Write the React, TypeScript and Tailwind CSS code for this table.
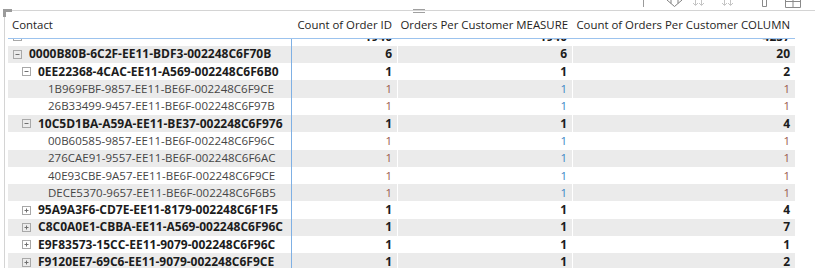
import React from "react"

type Row = {
  level: 0 | 1 | 2
  icon?: "minus" | "plus"
  label: string
  a: string
  b: string
  c: string
}

const rows: Row[] = [
  { level: 0, icon: "minus", label: "", a: "1940", b: "1940", c: "4257" },
  { level: 0, icon: "minus", label: "0000B80B-6C2F-EE11-BDF3-002248C6F70B", a: "6", b: "6", c: "20" },
  { level: 1, icon: "minus", label: "0EE22368-4CAC-EE11-A569-002248C6F6B0", a: "1", b: "1", c: "2" },
  { level: 2, label: "1B969FBF-9857-EE11-BE6F-002248C6F9CE", a: "1", b: "1", c: "1" },
  { level: 2, label: "26B33499-9457-EE11-BE6F-002248C6F97B", a: "1", b: "1", c: "1" },
  { level: 1, icon: "minus", label: "10C5D1BA-A59A-EE11-BE37-002248C6F976", a: "1", b: "1", c: "4" },
  { level: 2, label: "00B60585-9857-EE11-BE6F-002248C6F96C", a: "1", b: "1", c: "1" },
  { level: 2, label: "276CAE91-9557-EE11-BE6F-002248C6F6AC", a: "1", b: "1", c: "1" },
  { level: 2, label: "40E93CBE-9A57-EE11-BE6F-002248C6F9CE", a: "1", b: "1", c: "1" },
  { level: 2, label: "DECE5370-9657-EE11-BE6F-002248C6F6B5", a: "1", b: "1", c: "1" },
  { level: 1, icon: "plus", label: "95A9A3F6-CD7E-EE11-8179-002248C6F1F5", a: "1", b: "1", c: "4" },
  { level: 1, icon: "plus", label: "C8C0A0E1-CBBA-EE11-A569-002248C6F96C", a: "1", b: "1", c: "7" },
  { level: 1, icon: "plus", label: "E9F83573-15CC-EE11-9079-002248C6F96C", a: "1", b: "1", c: "1" },
  { level: 1, icon: "plus", label: "F9120EE7-69C6-EE11-9079-002248C6F9CE", a: "1", b: "1", c: "2" },
]

function ExpandIcon({ kind }: { kind: "minus" | "plus" }) {
  return (
    <svg width="9" height="9" viewBox="0 0 9 9" className="shrink-0">
      <rect x="0.5" y="0.5" width="8" height="8" fill="none" stroke="#a8a8a8" />
      <path d="M2.5 4.5h4" stroke="#707070" />
      {kind === "plus" && <path d="M4.5 2.5v4" stroke="#707070" />}
    </svg>
  )
}

function Toolbar() {
  return (
    <svg width="185" height="10" viewBox="0 0 185 10" className="absolute top-0 right-0">
      <path d="M13.5 0v7" stroke="#9a9a9a" />
      {/* drill down arrow */}
      <path d="M37 0l7.5 6.5L52 0" fill="none" stroke="#808080" />
      <path d="M41 0v3.5M48 0v3.5" stroke="#808080" />
      {/* double arrows */}
      <g fill="none" stroke="#c4c4c4">
        <path d="M65.5 0v5M63 3l2.5 2.5L68 3" />
        <path d="M71.5 0v5M69 3l2.5 2.5L74 3" />
        <path d="M94.5 0v5M92 3l2.5 2.5L97 3" />
        <path d="M100.5 0v5M98 3l2.5 2.5L103 3" />
      </g>
      <path d="M132.5 0v6.5h4V0" fill="none" stroke="#8a8a8a" />
      <path d="M155.5 0v7.5h15V0M163 0v7.5M155.5 1.5h15" fill="none" stroke="#8a8a8a" />
    </svg>
  )
}

export default function App() {
  const indent = (r: Row) => (r.level === 0 ? "pl-[5px]" : r.level === 1 ? "pl-[14px]" : "pl-[40px]")

  return (
    <div className="relative w-[815px] h-[268px] bg-white overflow-hidden font-['Open_Sans',sans-serif] text-[#252423]">
      <Toolbar />

      {/* drag handle */}
      <div className="absolute left-[413px] top-[9px] w-[12px] h-[4px] border-y border-[#a0a0a0] bg-white" />

      <div className="relative ml-[4px] mt-[10px] h-[258px] border-t border-l border-[#d4d4d4]">
        {/* corner mark */}
        <div className="absolute -left-[2px] -top-[2px] w-[9px] h-[8px] border-t-[3px] border-l-[3px] border-[#9b9b9b]" />

        <div className="ml-[3px] w-[787px]">
          {/* header */}
          <div className="flex h-[27px] items-center text-[11.4px] leading-none whitespace-nowrap">
            <div className="w-[283px] pl-[4px]">Contact</div>
            <div className="w-[107px] pr-[6px] text-right">Count of Order ID</div>
            <div className="w-[175px] pr-[5px] text-right">Orders Per Customer MEASURE</div>
            <div className="w-[222px] pr-[5px] text-right">Count of Orders Per Customer COLUMN</div>
          </div>
          <div className="h-px bg-[#9cc3ee]" />

          {/* body */}
          <div className="relative h-[229px] overflow-hidden">
            <div className="-mt-[10.8px]">
              {rows.map((r, i) => {
                const bold = r.level < 2
                const gray = i % 2 === 1
                return (
                  <div
                    key={i}
                    className={`flex h-[17.33px] items-center leading-none whitespace-nowrap ${gray ? "bg-[#ebebeb]" : "bg-white"} ${bold ? "text-[12px] font-bold text-[#1c1c1c]" : "text-[11.5px] text-[#454545]"}`}
                  >
                    <div className={`w-[283px] flex items-center ${indent(r)}`}>
                      {r.icon && <ExpandIcon kind={r.icon} />}
                      <span className={r.icon ? "ml-[7px]" : ""}>{r.label}</span>
                    </div>
                    <div className={`w-[107px] h-full flex items-center justify-end pr-[5px] border-r border-white ${bold ? "" : "text-[#9a5a4c]"}`}>{r.a}</div>
                    <div className={`w-[175px] h-full flex items-center justify-end pr-[5px] border-r border-white ${bold ? "" : "text-[#3d86c6]"}`}>{r.b}</div>
                    <div className={`w-[222px] h-full flex items-center justify-end pr-[5px] ${bold ? "" : "text-[#9a5a4c]"}`}>{r.c}</div>
                  </div>
                )
              })}
            </div>
            {/* column resize indicator */}
            <div className="absolute left-[283px] top-0 bottom-0 w-px bg-[#7fb0e4]" />
          </div>
        </div>
      </div>
    </div>
  )
}
